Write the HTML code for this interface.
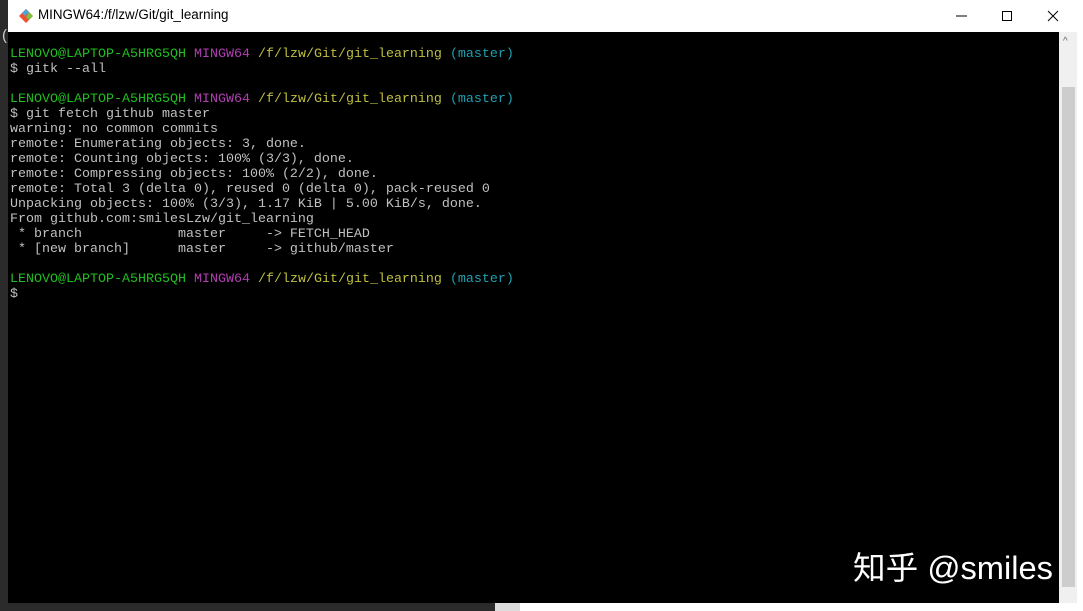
<!DOCTYPE html>
<html><head><meta charset="utf-8"><style>
html,body{margin:0;padding:0;width:1083px;height:611px;overflow:hidden;background:#2b2b2b;position:relative;font-family:"Liberation Sans",sans-serif}
.title{position:absolute;left:8px;top:0;width:1069px;height:32px;background:#fff}
.title .t{position:absolute;left:30px;top:7px;font-size:13.4px;color:#000}
.term{position:absolute;left:8px;top:32px;width:1051px;height:571px;background:#000}
.sb{position:absolute;left:1059px;top:32px;width:18px;height:571px;background:#f0f0f0}
.thumb{position:absolute;left:1062px;top:87px;width:13px;height:500px;background:#cdcdcd}
pre{position:absolute;left:10px;top:47px;margin:0;font-family:"Liberation Mono",monospace;font-size:13.33px;line-height:15px;color:#c0c0c0}
.g{color:#1fbf1f}.m{color:#b23fb2}.y{color:#bfbf3f}.c{color:#1fa0b0}
.wm{position:absolute;left:853px;top:543px;color:#fff;font-family:"Liberation Sans","Noto Sans CJK SC",sans-serif;font-size:32px;transform:scaleX(1.02);transform-origin:left;white-space:nowrap}
.right{position:absolute;left:1077px;top:0;width:6px;height:611px;background:#fff}
.bot{position:absolute;left:495px;top:603px;width:588px;height:8px;background:#fff}
.bot2{position:absolute;left:495px;top:603px;width:25px;height:8px;background:#ddd}
</style></head><body>
<div class="title">
<svg style="position:absolute;left:10px;top:8px" width="16" height="16" viewBox="0 0 16 16"><path d="M8 1L15 8L8 15L1 8Z" fill="#f05032"/><path d="M4 5L8 1L11 4L7 8Z" fill="#4aa3df"/><path d="M11 4L15 8L11 12L8 9Z" fill="#7cc142"/></svg>
<div class="t">MINGW64:/f/lzw/Git/git_learning</div>
<svg style="position:absolute;left:948px;top:8px" width="110" height="16"><line x1="0" y1="8" x2="11" y2="8" stroke="#000"/><rect x="46.5" y="3.5" width="9" height="9" fill="none" stroke="#000"/><path d="M92 3L102 13M102 3L92 13" stroke="#000"/></svg>
</div>
<div style="position:absolute;left:2px;top:27px;color:#ccc;font-size:15px">(</div>
<div class="term"></div>
<div class="sb"></div><div class="thumb"></div>
<div style="position:absolute;left:1063px;top:36px;color:#666;font-size:10px">^</div>
<div class="right"></div>
<div class="bot"></div><div class="bot2"></div>
<pre><span class="g">LENOVO@LAPTOP-A5HRG5QH</span> <span class="m">MINGW64</span> <span class="y">/f/lzw/Git/git_learning</span> <span class="c">(master)</span>
$ gitk --all

<span class="g">LENOVO@LAPTOP-A5HRG5QH</span> <span class="m">MINGW64</span> <span class="y">/f/lzw/Git/git_learning</span> <span class="c">(master)</span>
$ git fetch github master
warning: no common commits
remote: Enumerating objects: 3, done.
remote: Counting objects: 100% (3/3), done.
remote: Compressing objects: 100% (2/2), done.
remote: Total 3 (delta 0), reused 0 (delta 0), pack-reused 0
Unpacking objects: 100% (3/3), 1.17 KiB | 5.00 KiB/s, done.
From github.com:smilesLzw/git_learning
 * branch            master     -&gt; FETCH_HEAD
 * [new branch]      master     -&gt; github/master

<span class="g">LENOVO@LAPTOP-A5HRG5QH</span> <span class="m">MINGW64</span> <span class="y">/f/lzw/Git/git_learning</span> <span class="c">(master)</span>
$</pre>
<div class="wm">知乎 @smiles</div>
</body></html>
